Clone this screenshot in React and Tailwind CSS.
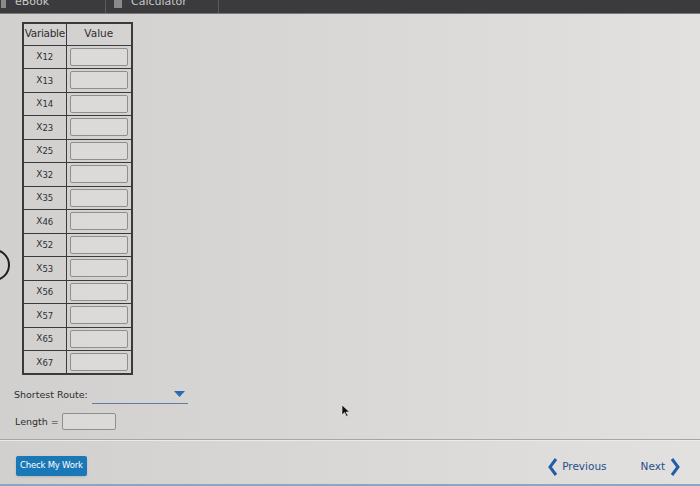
import React from "react";

const VARS = ["12", "13", "14", "23", "25", "32", "35", "46", "52", "53", "56", "57", "65", "67"];

function Chevron({ dir = "left" }) {
  return (
    <svg width="10" height="18" viewBox="0 0 10 18" className="shrink-0">
      <path
        d={dir === "left" ? "M8 1 L2 9 L8 17" : "M2 1 L8 9 L2 17"}
        fill="none"
        stroke="#1f5fa8"
        strokeWidth="3"
        strokeLinejoin="miter"
      />
    </svg>
  );
}

export default function App() {
  return (
    <div
      className="relative w-[700px] h-[486px] overflow-hidden bg-gradient-to-r from-[#d2d0ce] via-[#dad8d6] to-[#e2e1df] text-[#2e2e30]"
      style={{ fontFamily: '"DejaVu Sans", Verdana, sans-serif' }}
    >
      {/* top toolbar */}
      <div className="h-[14px] bg-[#3b3a3c] flex items-start text-[11px] text-[#c9c8c8] overflow-hidden border-b border-[#77767a]">
        <div className="w-[105px] flex items-start gap-[9px] mt-[-6px] pl-[1px]">
          <span className="w-[5px] h-[10px] bg-[#8a898b] mt-[4px]" />
          <span>eBook</span>
        </div>
        <div className="w-px h-full bg-[#5a595b]" />
        <div className="w-[112px] flex items-start gap-[9px] pl-[8px] mt-[-6px]">
          <span className="w-[8px] h-[8px] bg-[#8a898b] mt-[6px]" />
          <span>Calculator</span>
        </div>
        <div className="w-px h-full bg-[#5a595b]" />
      </div>

      {/* left edge circle */}
      <div className="absolute left-[-22px] top-[249px] w-[32px] h-[32px] rounded-full border-2 border-[#1e1e1e]" />

      {/* cursor */}
      <svg className="absolute left-[341px] top-[404px]" width="9" height="13" viewBox="0 0 9 13">
        <path d="M1 1 L1 11 L3.5 8.5 L5.5 12.5 L7 11.8 L5 8 L8.5 8 Z" fill="#111" stroke="#eee" strokeWidth="0.6" />
      </svg>

      <div className="pl-[22px] pt-[8px]">
        <table className="border-collapse border-2 border-[#3a393b] text-center">
          <thead>
            <tr className="h-[22px]">
              <th className="border border-[#3a393b] w-[43px] px-0 text-[10.5px] font-normal tracking-[-0.3px]">Variable</th>
              <th className="border border-[#3a393b] w-[66px] text-[10.5px] font-normal">Value</th>
            </tr>
          </thead>
          <tbody>
            {VARS.map(v => (
              <tr key={v} className="h-[23.5px]">
                <td className="border border-[#3a393b] text-[9px] leading-none">
                  X<span className="text-[8.5px] relative top-[1px]">{v}</span>
                </td>
                <td className="border border-[#3a393b] px-[3px] py-[2px]">
                  <div className="h-[18px] rounded-[2px] border border-[#8f8e8e] bg-[#dbdad8]" />
                </td>
              </tr>
            ))}
          </tbody>
        </table>
      </div>

      <div className="pl-[14px] mt-[13px] flex items-end gap-[4px] text-[9.5px]">
        <span className="mb-[2px]">Shortest Route:</span>
        <div className="w-[96px] h-[14px] border-b-[1.5px] border-[#5a7fa6] flex justify-end pr-[3px] pt-[1px]">
          <svg width="11" height="6" viewBox="0 0 11 6">
            <path d="M0 0 L11 0 L5.5 6 Z" fill="#2b6cb0" />
          </svg>
        </div>
      </div>

      <div className="pl-[15px] mt-[9px] flex items-center gap-[3px] text-[9.5px]">
        <span>Length =</span>
        <div className="w-[54px] h-[17px] rounded-[2px] border border-[#8f8e8e] bg-[#dcdad8]" />
      </div>

      <div className="mt-[9px] h-[2px] bg-[#a8a6a4] border-b border-[#ebeae8]" />

      <div className="flex items-center justify-between pl-[16px] pr-[20px] mt-[14px]">
        <button className="h-[20px] px-[4px] rounded-[2px] bg-[#1b78b6] text-white text-[8.5px] tracking-[-0.2px] shadow-sm">
          Check My Work
        </button>
        <div className="flex items-center text-[10.5px] text-[#1f4f8a] mt-[3px]">
          <div className="flex items-center gap-[4px]">
            <Chevron dir="left" />
            <span>Previous</span>
          </div>
          <div className="flex items-center gap-[5px] ml-[34px]">
            <span>Next</span>
            <Chevron dir="right" />
          </div>
        </div>
      </div>

      <div className="absolute left-0 right-0 bottom-0 h-[2px] bg-[#8aa6c4]" />
    </div>
  );
}
